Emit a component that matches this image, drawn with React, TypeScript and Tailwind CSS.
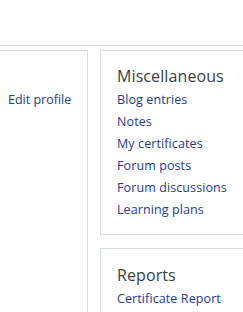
const misc = [
  "Blog entries",
  "Notes",
  "My certificates",
  "Forum posts",
  "Forum discussions",
  "Learning plans",
];

export default function App() {
  return (
    <div
      className="w-[243px] h-[312px] overflow-hidden bg-white"
      style={{ fontFamily: '"Open Sans", "Noto Sans", sans-serif' }}
    >
      <div className="h-[46px] border-b border-[#d5dce2]" />
      <div className="mt-[4px] flex gap-[12px] items-start">
        <div className="w-[88px] shrink-0 h-[300px] border-t border-r border-[#d5dce2] pl-[8px] pt-[38px]">
          <a className="block text-[12.5px] leading-[22px] text-[#1f3d8c] whitespace-nowrap">
            Edit profile
          </a>
        </div>
        <div className="flex-1 flex flex-col gap-[13px]">
          <section className="border-t border-l border-b border-[#d5dce2] pl-[16px] pt-[15px] pb-[13px]">
            <h3 className="text-[16px] leading-[20px] text-[#373f47] tracking-[0.1px] whitespace-nowrap mb-[3px]">
              Miscellaneous
            </h3>
            <ul>
              {misc.map((m) => (
                <li key={m}>
                  <a className="block text-[12.5px] leading-[22px] text-[#1f3d8c] tracking-[0.1px] whitespace-nowrap">
                    {m}
                  </a>
                </li>
              ))}
            </ul>
          </section>
          <section className="border-t border-l border-[#d5dce2] pl-[16px] pt-[16px] h-[80px]">
            <h3 className="text-[16px] leading-[20px] text-[#373f47] tracking-[0.1px] whitespace-nowrap mb-[3px]">
              Reports
            </h3>
            <a className="block text-[12.5px] leading-[22px] text-[#1f3d8c] tracking-[0.1px] whitespace-nowrap">
              Certificate Report
            </a>
          </section>
        </div>
      </div>
    </div>
  );
}
